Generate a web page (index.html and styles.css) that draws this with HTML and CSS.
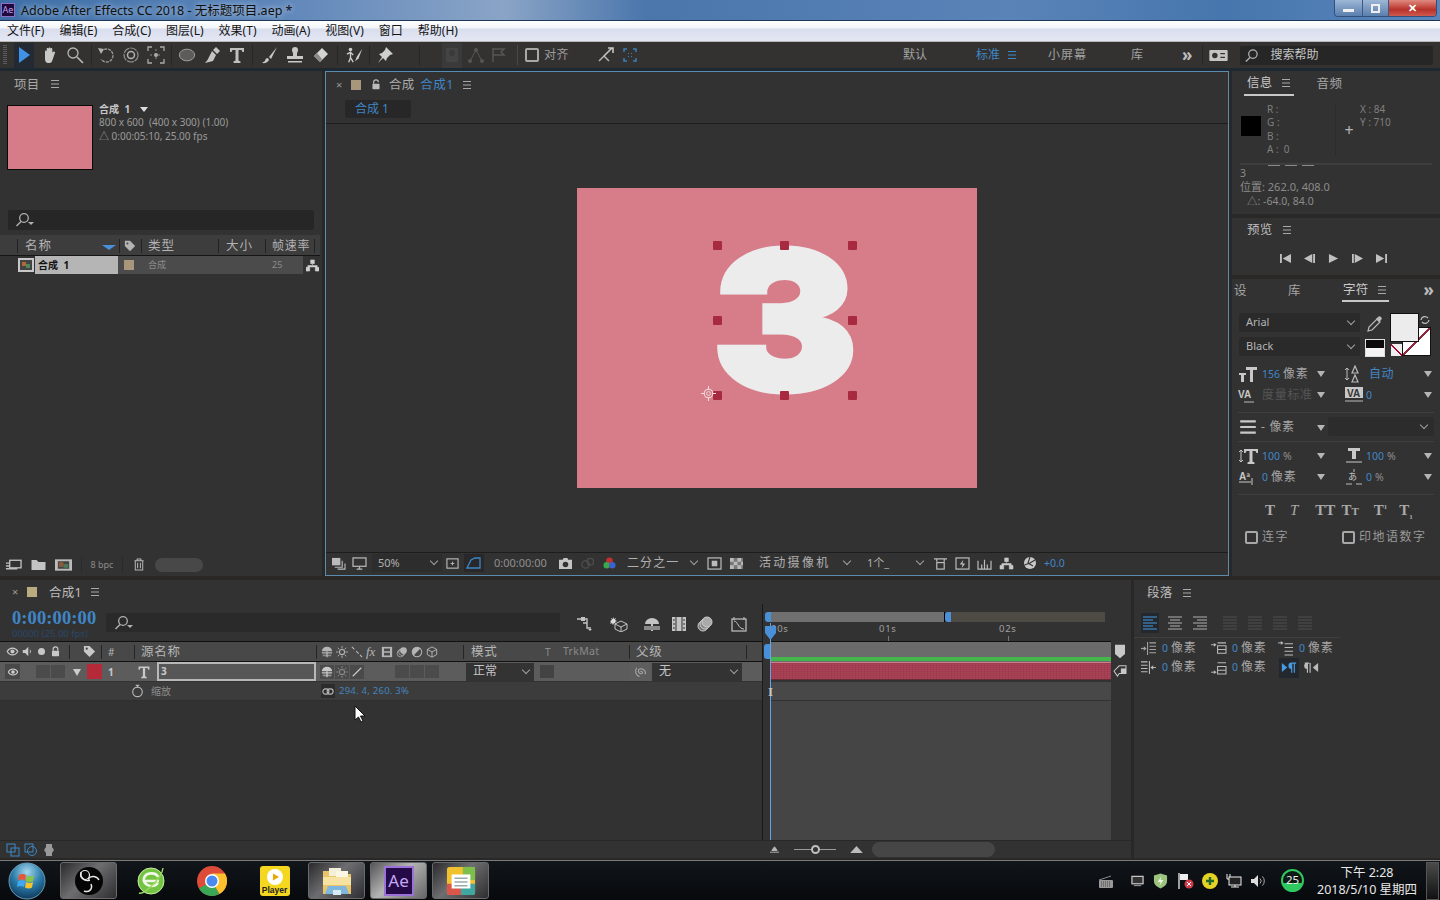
FILE: index.html
```html
<!DOCTYPE html>
<html lang="zh-CN">
<head>
<meta charset="utf-8">
<title>Adobe After Effects CC 2018</title>
<link rel="stylesheet" href="styles.css">
</head>
<body>
<svg class="defs" xmlns="http://www.w3.org/2000/svg">
  <symbol id="i-menu" viewBox="0 0 10 10"><path d="M1 1.5h8M1 5h8M1 8.500h8" stroke="currentColor" stroke-width="1.100" fill="none"/></symbol>
  <symbol id="i-search" viewBox="0 0 22 16"><circle cx="10" cy="6" r="4.300" fill="none" stroke="currentColor" stroke-width="1.300"/><path d="M7 9.500L2.500 14" stroke="currentColor" stroke-width="1.500"/><path d="M14 10h6l-3 3z" fill="currentColor"/></symbol>
  <symbol id="i-eye" viewBox="0 0 14 10"><path d="M1 5c3-5 9-5 12 0c-3 5-9 5-12 0z" fill="none" stroke="currentColor" stroke-width="1.300"/><circle cx="7" cy="5" r="2.300" fill="currentColor"/></symbol>
  <symbol id="i-tag" viewBox="0 0 14 14"><path d="M1 1h6l6 6l-6 6l-6-6z" fill="currentColor"/><circle cx="4" cy="4" r="1.200" fill="#444"/></symbol>
  <symbol id="i-lock" viewBox="0 0 12 14"><path d="M3 6V4a3 3 0 0 1 6 0v2" fill="none" stroke="currentColor" stroke-width="1.500"/><rect x="1.500" y="6" width="9" height="7" rx="1" fill="currentColor"/></symbol>
  <symbol id="i-shy" viewBox="0 0 14 14"><path d="M1 6a6 5 0 0 1 12 0z" fill="currentColor"/><path d="M7 6v7M1 8h12" stroke="currentColor" stroke-width="1.500"/><path d="M2 10h10v2H2z" fill="currentColor" opacity=".6"/></symbol>
  <symbol id="i-sun" viewBox="0 0 14 14"><circle cx="7" cy="7" r="3" fill="none" stroke="currentColor" stroke-width="1.200"/><path d="M7 0v3M7 11v3M0 7h3M11 7h3M2 2l2 2M10 10l2 2M12 2l-2 2M4 10l-2 2" stroke="currentColor"/></symbol>
  <symbol id="i-slash" viewBox="0 0 14 14"><path d="M1 1l3 3M6 6l3 3M10.500 10.500L13 13" stroke="currentColor" stroke-width="1.300"/></symbol>
  <symbol id="i-film" viewBox="0 0 14 14"><rect x="1" y="1" width="12" height="12" fill="currentColor"/><path d="M3.500 3h7v3h-7zM3.500 8h7v3h-7z" fill="#4a4a4a"/></symbol>
  <symbol id="i-blur" viewBox="0 0 16 16"><circle cx="6" cy="10" r="4.500" fill="none" stroke="currentColor"/><circle cx="8" cy="8" r="4.500" fill="none" stroke="currentColor"/><circle cx="10" cy="6" r="4.500" fill="currentColor"/></symbol>
  <symbol id="i-half" viewBox="0 0 14 14"><circle cx="7" cy="7" r="5.500" fill="none" stroke="currentColor" stroke-width="1.200"/><path d="M11 3A5.500 5.500 0 0 0 3 11z" fill="currentColor"/></symbol>
  <symbol id="i-cube" viewBox="0 0 14 14"><path d="M7 1l5.500 3v6L7 13l-5.500-3V4zM1.500 4L7 7l5.500-3M7 7v6" fill="none" stroke="currentColor" stroke-width="1.100"/></symbol>
  <symbol id="i-stopwatch" viewBox="0 0 14 16"><circle cx="7" cy="9" r="5.500" fill="none" stroke="currentColor" stroke-width="1.300"/><path d="M5 1.500h4M7 1.500v2.500" stroke="currentColor" stroke-width="1.300"/></symbol>
  <symbol id="i-link" viewBox="0 0 14 8"><rect x="1" y="1" width="7" height="6" rx="3" fill="none" stroke="currentColor" stroke-width="1.300"/><rect x="6" y="1" width="7" height="6" rx="3" fill="none" stroke="currentColor" stroke-width="1.300"/></symbol>
  <symbol id="i-align" viewBox="0 0 16 14"><path d="M1 1h14M1 4h10M1 7h14M1 10h10M1 13h14" stroke="currentColor" stroke-width="1.200"/></symbol>
  <symbol id="i-alignc" viewBox="0 0 16 14"><path d="M1 1h14M3 4h10M1 7h14M3 10h10M1 13h14" stroke="currentColor" stroke-width="1.200"/></symbol>
  <symbol id="i-alignr" viewBox="0 0 16 14"><path d="M1 1h14M5 4h10M1 7h14M5 10h10M1 13h14" stroke="currentColor" stroke-width="1.200"/></symbol>
  <symbol id="i-justify" viewBox="0 0 16 14"><path d="M1 1h14M1 4h14M1 7h14M1 10h14M1 13h14" stroke="currentColor" stroke-width="1.200"/></symbol>
  <symbol id="i-indent" viewBox="0 0 18 16"><path d="M8 1v14M10 2h7M10 5.500h7M10 9h7M10 12.500h7" stroke="currentColor" stroke-width="1.100"/><path d="M1 8h4" stroke="currentColor" stroke-width="1.300"/><path d="M4 5.500L7 8l-3 2.500z" fill="currentColor"/></symbol>
  <symbol id="i-t" viewBox="0 0 18 18"><path d="M2 2h14v4h-1.500l-1-2H10.500v10.500l2 1V17h-7v-1.500l2-1V4H4.500l-1 2H2z" fill="currentColor"/></symbol>
</svg>

<header class="titlebar">
  <span class="ae-mini">Ae</span>
  <span class="title-text">Adobe After Effects CC 2018 - 无标题项目.aep *</span>
  <div class="winctl">
    <span class="wbtn wmin"><i class="wmin-bar"></i></span>
    <span class="wbtn wmax"><i class="wmax-box"></i></span>
    <span class="wbtn wclose">✕</span>
  </div>
</header>
<nav class="menubar">
  <span>文件(F)</span><span>编辑(E)</span><span>合成(C)</span><span>图层(L)</span><span>效果(T)</span><span>动画(A)</span><span>视图(V)</span><span>窗口</span><span>帮助(H)</span>
</nav>

<div class="toolbar">
  <div class="tools">
    <i class="grip"></i>
    <span class="tool sel"><svg viewBox="0 0 18 18"><path d="M4 1v16l11-8z" fill="#3f92e8"/></svg></span>
    <span class="tool"><svg viewBox="0 0 18 18"><path d="M4 9V5.500c0-1.300 1.700-1.300 1.700 0V3c0-1.300 1.900-1.300 1.900 0v-.5c0-1.300 1.900-1.300 1.900 0V3c0-1.300 1.800-1.300 1.800 0v3.500l1-.8c1-.8 2.300.2 1.600 1.300L11.500 14c-.6 1.700-1.300 3-3 3H7c-2 0-3-2-3-4z" fill="#c8c8c8"/></svg></span>
    <span class="tool"><svg viewBox="0 0 18 18"><circle cx="7" cy="7" r="5" fill="none" stroke="#b5b5b5" stroke-width="1.300"/><path d="M11 11l6 6" stroke="#b5b5b5" stroke-width="1.700"/></svg></span>
    <i class="tsep s1"></i>
    <span class="tool"><svg viewBox="0 0 18 18"><path d="M4 6a6.500 6.500 0 1 1 0 7" fill="none" stroke="#9a9a9a" stroke-width="1.300" stroke-dasharray="3 1"/><path d="M1 2l6 1-3 5z" fill="#b0b0b0"/></svg></span>
    <span class="tool"><svg viewBox="0 0 18 18"><circle cx="9" cy="9" r="7" fill="none" stroke="#909090" stroke-width="1.200" stroke-dasharray="7 1"/><circle cx="9" cy="9" r="3.500" fill="none" stroke="#b0b0b0" stroke-width="1.500"/></svg></span>
    <span class="tool"><svg viewBox="0 0 18 18"><path d="M1 5V1h4M13 1h4v4M17 13v4h-4M5 17H1v-4" fill="none" stroke="#aaa" stroke-width="1.300"/><path d="M9 3v12M3 9h12" stroke="#888" stroke-dasharray="2 2"/><circle cx="9" cy="9" r="2" fill="#aaa"/></svg></span>
    <i class="tsep s2"></i>
    <span class="tool"><svg viewBox="0 0 20 18"><ellipse cx="10" cy="9" rx="8.500" ry="6.500" fill="#5c5c5c" stroke="#a5a5a5"/></svg></span>
    <span class="tool"><svg viewBox="0 0 18 18"><path d="M13 1l4 4-3 3-4-4zM9 5l4 4-3 6-8 2 5-6a1.500 1.500 0 1 1 1 1l-5 5z" fill="#c4c4c4"/></svg></span>
    <span class="tool"><svg class="tool-t" viewBox="0 0 18 18"><use href="#i-t"/></svg></span>
    <i class="tsep s3"></i>
    <span class="tool"><svg viewBox="0 0 18 18"><path d="M16 1L8 11l2 2zM7 12c-2 0-3 1.500-3 3l-3 2c3 .5 6-.5 7-3z" fill="#c8c8c8"/></svg></span>
    <span class="tool"><svg viewBox="0 0 18 18"><path d="M7 8c0-2-1-2-1-4a3 3 0 0 1 6 0c0 2-1 2-1 4v2h6v3H1v-3h6zM2 15h14v1.500H2z" fill="#c8c8c8"/></svg></span>
    <span class="tool"><svg viewBox="0 0 18 18"><path d="M11 2l6 6-8 8-6-6z" fill="#d4d4d4"/><path d="M6 7l5 6-2 3-6-6z" fill="#8a8a8a"/></svg></span>
    <i class="tsep s4"></i>
    <span class="tool"><svg viewBox="0 0 20 18"><circle cx="5" cy="3" r="2" fill="#ccc"/><path d="M1 8l4-2 3 3M5 6v6l-2 5M5 12l3 5" fill="none" stroke="#ccc" stroke-width="1.500"/><path d="M18 2l-6 9-2 5 4-3z" fill="#ccc"/></svg></span>
    <i class="tsep s5"></i>
    <span class="tool"><svg viewBox="0 0 18 18"><path d="M10 1l7 7-3 1-3 3-1 3-3-3-5 5 4-6-3-3 3-1 3-3z" fill="#d0d0d0"/></svg></span>
    <i class="tsep s6"></i>
    <span class="tool dimbox"><svg viewBox="0 0 18 18"><rect x="3" y="2" width="12" height="14" fill="#444"/><circle cx="9" cy="7" r="3" fill="#3a3a3a"/></svg></span>
    <span class="tool dim"><svg viewBox="0 0 18 18"><circle cx="9" cy="4" r="2" fill="#555"/><circle cx="3" cy="15" r="2" fill="#555"/><circle cx="15" cy="15" r="2" fill="#555"/><path d="M9 4L3 15M9 4l6 11" stroke="#555"/></svg></span>
    <span class="tool dim"><svg viewBox="0 0 18 18"><path d="M3 2v14M3 3h11l-3 3 3 3H3" fill="none" stroke="#555" stroke-width="1.500"/></svg></span>
    <i class="tsep s7"></i>
    <span class="check big"></span><span class="snap">对齐</span>
    <span class="tool axis"><svg viewBox="0 0 18 18"><path d="M2 15l5-5 5 5" fill="none" stroke="#b5b5b5" stroke-width="1.500"/><path d="M7 10l8-8M11 2h5v5" fill="none" stroke="#c5c5c5" stroke-width="1.600"/></svg></span>
    <span class="tool fit"><svg viewBox="0 0 18 18"><path d="M3 6V3h3M12 3h3v3M15 12v3h-3M6 15H3v-3" fill="none" stroke="#3c7fb5" stroke-width="1.500"/><path d="M7 7l1 1M11 7l-1 1M7 11l1-1M11 11l-1-1" stroke="#3c7fb5"/></svg></span>
  </div>
  <div class="workspaces">
    <span class="ws ws-def">默认</span>
    <span class="ws ws-active">标准</span>
    <svg class="menu-ic blue ws-menu"><use href="#i-menu"/></svg>
    <span class="ws ws-small">小屏幕</span>
    <span class="ws ws-lib">库</span>
    <span class="chev">»</span>
    <i class="tsep s8"></i>
    <span class="ws-gear"><svg viewBox="0 0 20 12"><rect width="20" height="12" rx="1" fill="#c4c4c4"/><circle cx="6" cy="6" r="3" fill="#333"/><path d="M12 4h5M12 8h5" stroke="#333" stroke-width="1.500"/></svg></span>
    <div class="help-search"><svg class="help-ic" viewBox="0 0 16 16"><circle cx="9.500" cy="6.500" r="4.500" fill="none" stroke="#b5b5b5" stroke-width="1.300"/><path d="M6.500 10L2 14.500" stroke="#b5b5b5" stroke-width="1.500"/></svg><span>搜索帮助</span></div>
  </div>
</div>

<main class="upper">
  <section class="panel project">
    <div class="panel-head"><span class="ptitle">项目</span><svg class="menu-ic"><use href="#i-menu"/></svg></div>
    <div class="proj-info">
      <div class="thumb"></div>
      <div class="proj-meta">
        <div class="proj-name">合成 1 <b class="tri-w"></b></div>
        <div>800 x 600 &nbsp;(400 x 300) (1.00)</div>
        <div>△ 0:00:05:10, 25.00 fps</div>
      </div>
    </div>
    <div class="search proj-search"><svg viewBox="0 0 22 16"><use href="#i-search"/></svg></div>
    <div class="proj-cols">
      <span class="pc c-name">名称<b class="sort"></b></span>
      <span class="pc c-tag"><svg viewBox="0 0 14 14"><use href="#i-tag"/></svg></span>
      <span class="pc c-type">类型</span>
      <span class="pc c-size">大小</span>
      <span class="pc c-fps">帧速率</span>
    </div>
    <div class="proj-row">
      <svg class="comp-ic" viewBox="0 0 16 14"><rect width="16" height="14" fill="#c8c8c8"/><rect x="2" y="2" width="12" height="10" fill="#444"/><rect x="4" y="4" width="4" height="4" fill="#b06a3a"/><rect x="8" y="6" width="4" height="4" fill="#4a8a5a"/></svg>
      <span class="row-name">合成 1</span>
      <span class="row-rest"><i class="swatch-tan"></i><span class="row-type">合成</span><span class="row-fps">25</span></span>
      <svg class="flow-ic" viewBox="0 0 14 14"><path d="M5 1h4v4H5zM0 9h4v4H0zM10 9h4v4h-4zM7 5v2M2 9V7h10v2" fill="#d0d0d0" stroke="#d0d0d0" stroke-width=".6"/></svg>
    </div>
    <div class="grow"></div>
    <div class="proj-foot">
      <svg class="fi" viewBox="0 0 18 12"><rect x="5" y="1" width="12" height="8" fill="none" stroke="#c0c0c0" stroke-width="1.400"/><path d="M1 4h4M1 7h4M1 10h12" stroke="#c0c0c0" stroke-width="1.500"/></svg>
      <svg class="fi" viewBox="0 0 16 12"><path d="M1 1h5l2 2h7v8H1z" fill="#c4c4c4"/></svg>
      <svg class="fi" viewBox="0 0 18 12"><rect width="18" height="12" fill="#bbb"/><rect x="3" y="2" width="12" height="8" fill="#444"/><rect x="4" y="3" width="5" height="5" fill="#8a5a3a"/><rect x="9" y="5" width="5" height="4" fill="#4a7a5a"/></svg>
      <span class="bpc">8 bpc</span>
      <svg class="fi trash" viewBox="0 0 12 14"><path d="M1 3h10M4 3V1h4v2M2 3v10h8V3M4.500 5v6M7.500 5v6" fill="none" stroke="#b5b5b5" stroke-width="1.100"/></svg>
      <span class="pill"></span>
    </div>
  </section>

  <section class="panel comp">
    <div class="comp-head">
      <span class="x">×</span><i class="sq-tan"></i>
      <svg class="lock-ic" viewBox="0 0 12 14"><path d="M3 6V4a3 3 0 0 1 6 0" fill="none" stroke="#bbb" stroke-width="1.500"/><rect x="1.500" y="6" width="9" height="7" rx="1" fill="#bbb"/></svg>
      <span class="ptitle">合成 <em>合成1</em></span>
      <svg class="menu-ic"><use href="#i-menu"/></svg>
    </div>
    <div class="comp-tabs"><span class="comp-tab">合成 1</span></div>
    <div class="canvas">
      <div class="stage">
        <div class="bounds">
          <span class="digit">3</span>
          <i class="h h1"></i><i class="h h2"></i><i class="h h3"></i><i class="h h4"></i><i class="h h5"></i><i class="h h6"></i><i class="h h7"></i><i class="h h8"></i>
          <svg class="anchor" viewBox="0 0 14 14"><circle cx="7" cy="7" r="4" fill="none" stroke="#f2dcdc" stroke-width="1"/><circle cx="7" cy="7" r="1.800" fill="none" stroke="#f2dcdc" stroke-width=".8"/><path d="M7 0v3M7 11v3M0 7h3M11 7h3" stroke="#f2dcdc"/></svg>
        </div>
      </div>
    </div>
    <div class="comp-foot">
      <svg class="cf w1" viewBox="0 0 16 14"><rect x="1" y="1" width="9" height="8" fill="#bbb"/><path d="M12 4v7H4M15 7v6H7" fill="none" stroke="#bbb" stroke-width="1.200"/></svg>
      <svg class="cf w2" viewBox="0 0 16 14"><rect x="1" y="1" width="14" height="9" fill="none" stroke="#bbb" stroke-width="1.300"/><path d="M5 13h6M8 10v3" stroke="#bbb" stroke-width="1.300"/></svg>
      <span class="cdrop d50">50%<b class="v"></b></span>
      <svg class="cf w3" viewBox="0 0 16 14"><rect x="2" y="2" width="12" height="10" fill="none" stroke="#bbb" stroke-width="1.200"/><path d="M8 5v4M6 7h4" stroke="#bbb"/></svg>
      <span class="cf-act"><svg viewBox="0 0 16 14"><path d="M1 12h13V2H9L5 4z M1 12l4-8" fill="none" stroke="#3f86c6" stroke-width="1.300"/></svg></span>
      <span class="ctime">0:00:00:00</span>
      <svg class="cf w4" viewBox="0 0 16 14"><path d="M1 3h4l1-2h4l1 2h4v10H1z" fill="#c4c4c4"/><circle cx="8" cy="8" r="3" fill="#333"/></svg>
      <svg class="cf w5" viewBox="0 0 16 14"><circle cx="6" cy="8" r="4" fill="none" stroke="#4d4d4d" stroke-width="1.400"/><circle cx="11" cy="5" r="3.500" fill="none" stroke="#4d4d4d" stroke-width="1.400"/></svg>
      <svg class="cf w6" viewBox="0 0 16 14"><circle cx="8" cy="4" r="3.500" fill="#c43030"/><circle cx="5" cy="9" r="3.500" fill="#38a848"/><circle cx="11" cy="9" r="3.500" fill="#3c62cf"/></svg>
      <span class="cdrop dhalf">二分之一<b class="v"></b></span>
      <svg class="cf w7" viewBox="0 0 16 14"><rect x="1" y="1" width="14" height="12" fill="none" stroke="#bbb" stroke-width="1.300"/><rect x="5" y="4" width="6" height="6" fill="#bbb"/></svg>
      <svg class="cf w8" viewBox="0 0 16 14"><rect x="1" y="1" width="14" height="12" fill="#777"/><path d="M1 1h4v4H1zM9 1h4v4H9zM5 5h4v4H5zM13 5h2v4h-2zM1 9h4v4H1zM9 9h4v4H9z" fill="#bbb"/></svg>
      <span class="cdrop dcam">活动摄像机<b class="v"></b></span>
      <span class="cdrop done">1个_<b class="v"></b></span>
      <svg class="cf w9" viewBox="0 0 16 14"><path d="M1 2h14M4 2v3M12 2v3" stroke="#bbb" stroke-width="1.300"/><rect x="4" y="6" width="8" height="7" fill="none" stroke="#bbb" stroke-width="1.300"/></svg>
      <svg class="cf w9" viewBox="0 0 16 14"><rect x="1" y="1" width="14" height="12" fill="none" stroke="#bbb" stroke-width="1.300"/><path d="M9 3L5 8h3l-1 4 4-5H8z" fill="#bbb"/></svg>
      <svg class="cf w9" viewBox="0 0 16 14"><path d="M1 4v9h14V4M5 13V8M8 13V3M11 13V8" fill="none" stroke="#bbb" stroke-width="1.300"/></svg>
      <svg class="cf w9" viewBox="0 0 14 14"><path d="M5 1h4v4H5zM0 9h4v4H0zM10 9h4v4h-4zM7 5v2M2 9V7h10v2" fill="#c8c8c8" stroke="#c8c8c8" stroke-width=".6"/></svg>
      <svg class="cf w10" viewBox="0 0 14 14"><circle cx="7" cy="7" r="6" fill="#c8c8c8"/><path d="M7 1L5 7l5 3M1.500 9L7 7M12 4L7 7" stroke="#333" stroke-width="1.100" fill="none"/></svg>
      <span class="plus">+0.0</span>
    </div>
  </section>

  <aside class="right">
    <section class="panel info">
      <div class="tabs"><span class="tab active">信息<svg class="menu-ic"><use href="#i-menu"/></svg></span><span class="tab t-audio">音频</span></div>
      <div class="info-body">
        <i class="black"></i>
        <div class="rgb"><div>R :</div><div>G :</div><div>B :</div><div>A : &nbsp;0</div></div>
        <i class="vsep"></i>
        <span class="cross">+</span>
        <div class="xy"><div>X : 84</div><div>Y : 710</div></div>
      </div>
      <div class="info-clip"><i></i><i></i><i></i></div>
      <div class="info-extra">
        <div class="ie1">3</div>
        <div class="ie2">位置: 262.0, 408.0</div>
        <div class="ie3">△: -64.0, 84.0</div>
      </div>
    </section>
    <section class="panel preview">
      <div class="pv-head"><span class="ptitle lt">预览</span><svg class="menu-ic"><use href="#i-menu"/></svg></div>
      <div class="pv-ctl">
        <svg viewBox="0 0 14 12"><path d="M2 1v10" stroke="#c0c0c0" stroke-width="2"/><path d="M13 1v10L4 6z" fill="#c0c0c0"/></svg>
        <svg viewBox="0 0 14 12"><path d="M12 1v10" stroke="#c0c0c0" stroke-width="2"/><path d="M10 1v10L1 6z" fill="#c0c0c0"/></svg>
        <svg viewBox="0 0 14 12"><path d="M2 1v10l10-5z" fill="#c0c0c0"/></svg>
        <svg viewBox="0 0 14 12"><path d="M2 1v10" stroke="#c0c0c0" stroke-width="2"/><path d="M4 1v10l9-5z" fill="#c0c0c0"/></svg>
        <svg viewBox="0 0 14 12"><path d="M12 1v10" stroke="#c0c0c0" stroke-width="2"/><path d="M1 1v10l9-5z" fill="#c0c0c0"/></svg>
      </div>
    </section>
    <section class="panel chars">
      <div class="tabs ctabs"><span class="tab t-she">设</span><span class="tab t-lib">库</span><span class="tab active t-ch">字符<svg class="menu-ic"><use href="#i-menu"/></svg></span><span class="chev c-ch">»</span></div>
      <div class="font-area">
        <div class="font-sel">
          <div class="fsel">Arial<b class="v"></b></div>
          <div class="fsel">Black<b class="v"></b></div>
        </div>
        <div class="font-tools">
          <svg class="dropper" viewBox="0 0 16 16"><path d="M10 3l3 3-8 8-4 1 1-4z" fill="none" stroke="#bbb" stroke-width="1.200"/><path d="M9 3l2-2c1-1 2-1 3 0s1 2 0 3l-2 2z" fill="#bbb"/></svg>
          <div class="bw"></div>
        </div>
        <div class="swatches">
          <i class="sw-stroke"></i>
          <i class="sw-fill"></i>
          <i class="sw-none"></i>
          <svg class="sw-swap" viewBox="0 0 12 12"><path d="M2 6a4 4 0 0 1 7-2M10 6a4 4 0 0 1-7 2" fill="none" stroke="#bbb" stroke-width="1.300"/></svg>
        </div>
      </div>
      <div class="cgrid sepb">
        <div class="cc"><svg class="ci" viewBox="0 0 20 18"><path d="M1 8h7v2H6v7H3v-7H1z M8 2h11v3h-4v12h-3V5H8z" fill="#c8c8c8"/></svg><span class="bl">156</span><span class="u">像素</span><b class="tr"></b></div>
        <div class="cc c2"><svg class="ci" viewBox="0 0 20 18"><path d="M11 1l-3 7h6zM11 10l-3 7h6z" fill="none" stroke="#bbb" stroke-width="1.200"/><path d="M3 3v12M1 5l2-2 2 2M1 13l2 2 2-2" fill="none" stroke="#bbb"/></svg><span class="bl auto">自动</span><b class="tr"></b></div>
        <div class="cc"><svg class="ci" viewBox="0 0 20 18"><text x="0" y="12" class="svgt">VA</text><path d="M6 16h10" stroke="#bbb"/></svg><span class="u dimt">度量标准</span><b class="tr"></b></div>
        <div class="cc c2"><svg class="ci" viewBox="0 0 20 18"><rect x="1" y="1" width="18" height="11" fill="#c8c8c8"/><text x="3" y="10.500" class="svgd">VA</text><path d="M1 15h18" stroke="#bbb"/></svg><span class="bl">0</span><b class="tr"></b></div>
      </div>
      <div class="crow sepb">
        <svg class="ci" viewBox="0 0 18 14"><path d="M2 2h14M2 7h14M2 12h14" stroke="#c8c8c8" stroke-width="2"/></svg>
        <span class="u">- 像素</span><b class="tr"></b>
        <span class="empty-drop"><b class="v"></b></span>
      </div>
      <div class="cgrid sepb g3">
        <div class="cc"><svg class="ci" viewBox="0 0 20 18"><use href="#i-t" x="3"/><path d="M3 3v12M1 5l2-2 2 2M1 13l2 2 2-2" fill="none" stroke="#c8c8c8"/></svg><span class="bl">100</span><span class="us">%</span><b class="tr"></b></div>
        <div class="cc c2"><svg class="ci" viewBox="0 0 20 18"><path d="M4 1h12v3h-4v8H8V4H4z" fill="#c8c8c8"/><path d="M2 15h16" stroke="#c8c8c8"/></svg><span class="bl">100</span><span class="us">%</span><b class="tr"></b></div>
        <div class="cc"><svg class="ci" viewBox="0 0 20 18"><text x="1" y="12" class="svgt">Aª</text><path d="M1 14h12M14 10v7" stroke="#c8c8c8"/></svg><span class="bl">0</span><span class="u">像素</span><b class="tr"></b></div>
        <div class="cc c2"><svg class="ci" viewBox="0 0 20 18"><text x="4" y="12" class="svgs">あ</text><path d="M10 1v3M2 16h6M12 16h6" stroke="#bbb"/></svg><span class="bl">0</span><span class="us">%</span><b class="tr"></b></div>
      </div>
      <div class="styles"><span>T</span><span class="it">T</span><span class="tt">TT</span><span class="tsc">T<small>T</small></span><span class="tsup">T<sup>1</sup></span><span class="tsub">T<sub>1</sub></span></div>
      <div class="ligs"><span class="check"></span><span class="lt1">连字</span><span class="check c-hi"></span><span class="lt1">印地语数字</span></div>
    </section>
  </aside>
</main>

<section class="lower">
  <section class="panel timeline">
    <div class="tl-head">
      <span class="x">×</span><i class="sq-tan lt"></i><span class="ptitle lt tl-name">合成1</span><svg class="menu-ic"><use href="#i-menu"/></svg>
    </div>
    <div class="tl-grid">
      <div class="tl-left">
        <div class="tl-ctl">
          <div class="timecode"><div class="tc">0:00:00:00</div><div class="tf">00000 (25.00 fps)</div></div>
          <div class="search tl-search"><svg viewBox="0 0 22 16"><use href="#i-search"/></svg></div>
          <div class="tl-btns">
            <svg viewBox="0 0 18 16"><path d="M1 3h6M7 3h4v9h4M7 7h4" fill="none" stroke="#c4c4c4" stroke-width="1.400"/><rect x="5" y="1" width="4" height="4" fill="#c4c4c4"/><path d="M12 13h4l-2 2z" fill="#c4c4c4"/></svg>
            <svg viewBox="0 0 18 16"><path d="M3 1l1 2 2-1-1 2 2 1-2 1 1 2-2-1-1 2-1-2-2 1 1-2-1-1 2-1-1-2 2 1z" fill="#ddd"/><path d="M11 5l6 3v5l-6 3-6-3V8zM5 8l6 3 6-3M11 11v5" fill="none" stroke="#c4c4c4"/></svg>
            <svg viewBox="0 0 18 16"><path d="M2 8a7 6 0 0 1 14 0z" fill="#c4c4c4"/><path d="M9 8v7" stroke="#c4c4c4" stroke-width="2"/><path d="M1 10h16v4H1z" fill="#8a8a8a"/></svg>
            <svg viewBox="0 0 18 16"><rect x="2" y="1" width="14" height="14" fill="#c4c4c4"/><path d="M6 1v14M12 1v14" stroke="#333"/><path d="M3 4h2M3 8h2M3 12h2M13 4h2M13 8h2M13 12h2" stroke="#333"/></svg>
            <svg viewBox="0 0 18 16"><circle cx="7" cy="10" r="5" fill="#777" stroke="#ccc"/><circle cx="9" cy="8" r="5" fill="#888" stroke="#ccc"/><circle cx="11" cy="6" r="5" fill="#aaa" stroke="#ccc"/></svg>
            <svg viewBox="0 0 18 16"><rect x="2" y="3" width="14" height="12" fill="none" stroke="#c4c4c4" stroke-width="1.200"/><path d="M4 5c4 0 4 8 10 8M4 1v3M14 1v3" fill="none" stroke="#c4c4c4"/></svg>
          </div>
        </div>
        <div class="tl-cols">
          <span class="tc-ic"><svg class="e" viewBox="0 0 14 10"><use href="#i-eye"/></svg><svg viewBox="0 0 14 14"><path d="M1 5h3l4-4v12l-4-4H1zM10 4a4 4 0 0 1 0 6" fill="#c8c8c8"/></svg><i class="dot"></i><svg viewBox="0 0 12 14"><use href="#i-lock"/></svg></span>
          <span class="tc-tag"><svg viewBox="0 0 14 14"><use href="#i-tag"/></svg></span>
          <span class="tc-num">#</span>
          <span class="tc-src">源名称</span>
          <span class="tc-sw"><svg viewBox="0 0 14 14"><use href="#i-shy"/></svg><svg viewBox="0 0 14 14"><use href="#i-sun"/></svg><svg viewBox="0 0 14 14"><use href="#i-slash"/></svg><span class="fx">fx</span><svg viewBox="0 0 14 14"><use href="#i-film"/></svg><svg viewBox="0 0 16 16"><use href="#i-blur"/></svg><svg viewBox="0 0 14 14"><use href="#i-half"/></svg><svg viewBox="0 0 14 14"><use href="#i-cube"/></svg></span>
          <span class="tc-mode">模式</span>
          <span class="tc-t">T</span><span class="tc-trk">TrkMat</span>
          <span class="tc-par">父级</span>
          <span class="tc-end"></span>
        </div>
        <div class="layer">
          <span class="l-eye"><svg viewBox="0 0 14 10"><use href="#i-eye"/></svg></span>
          <i class="lbox b1"></i><i class="lbox"></i>
          <b class="twirl"></b>
          <i class="lred"></i>
          <span class="lnum">1</span>
          <svg class="lt-t" viewBox="0 0 18 18"><use href="#i-t"/></svg>
          <span class="lname">3</span>
          <span class="lsw"><svg viewBox="0 0 14 14"><use href="#i-shy"/></svg></span>
          <span class="lsw dimsw"><svg viewBox="0 0 14 14"><use href="#i-sun"/></svg></span>
          <span class="lsw"><svg viewBox="0 0 14 14"><path d="M2 12L12 2" stroke="currentColor" stroke-width="1.400"/></svg></span>
          <i class="lbox b2"></i><i class="lbox"></i><i class="lbox"></i>
          <span class="ldrop lmode">正常<b class="v"></b></span>
          <i class="lbox b3"></i>
          <span class="spiral"><svg viewBox="0 0 14 14"><path d="M7 7a1.500 1.500 0 0 1 2 2a3 3 0 0 1-4-4a4.500 4.500 0 0 1 7 5M3 3a6 6 0 0 0 3 9.500" fill="none" stroke="#aaa" stroke-width="1.100"/></svg></span>
          <span class="ldrop lparent">无<b class="v"></b></span>
        </div>
        <div class="prop">
          <svg class="stop" viewBox="0 0 14 16"><use href="#i-stopwatch"/></svg>
          <span class="pname">缩放</span>
          <span class="plink"><svg viewBox="0 0 14 8"><use href="#i-link"/></svg></span>
          <span class="pval">294. 4, 260. 3%</span>
        </div>
        <div class="grow"></div>
      </div>
      <div class="tl-right">
        <div class="ruler">
          <div class="navbar"><i class="nav-h"></i><div class="nav-on"></div><i class="nav-h"></i><div class="nav-off"></div></div>
          <div class="marks"><span class="m0">00s</span><span class="m1">01s</span><span class="m2">02s</span><i class="tick t-a"></i><i class="tick t-b"></i></div>
        </div>
        <div class="work"><i class="work-h"></i><div class="work-main"><div class="work-green"></div></div><svg class="shield" viewBox="0 0 14 18"><path d="M1 1h12v11l-6 5-6-5z" fill="#c8c8c8"/></svg></div>
        <div class="bar-row"><div class="lbar"></div><svg class="shield-b" viewBox="0 0 16 14"><path d="M1 7l6-6h8v9H7l-2 3z" fill="#333" stroke="#c8c8c8" stroke-width="1.200"/><rect x="9" y="4" width="6" height="6" fill="#c8c8c8"/></svg></div>
        <div class="prop-r"><div class="prop-area"></div></div>
        <div class="rest-r"><div class="rest-area"></div></div>
        <i class="playhead"></i>
        <i class="phead-top"></i>
        <span class="ibeam">I</span>
      </div>
    </div>
    <div class="tl-foot">
      <svg viewBox="0 0 14 14"><rect x="1" y="1" width="8" height="8" fill="none" stroke="#3f86c6"/><rect x="5" y="5" width="8" height="8" fill="none" stroke="#3f86c6"/></svg>
      <svg viewBox="0 0 14 14"><rect x="1" y="1" width="8" height="8" fill="none" stroke="#3f86c6"/><circle cx="8" cy="8" r="4.500" fill="none" stroke="#3f86c6"/></svg>
      <svg viewBox="0 0 14 14"><path d="M4 1h6v3l2 3-2 3v3H4v-3L2 7l2-3z" fill="#999"/></svg>
      <span class="grow"></span>
      <svg class="zoom-a" viewBox="0 0 14 10"><path d="M7 2l3 4H4z M2 8h10" fill="#bbb" stroke="#bbb"/></svg>
      <span class="zslider"><i></i></span>
      <svg class="zoom-b" viewBox="0 0 18 10"><path d="M9 1l7 8H2z" fill="#bbb"/></svg>
      <span class="zpill"></span>
    </div>
  </section>
  <section class="panel para">
    <div class="pv-head para-head"><span class="ptitle lt">段落</span><svg class="menu-ic"><use href="#i-menu"/></svg></div>
    <div class="al-row">
      <span class="al on"><svg viewBox="0 0 16 14"><use href="#i-align"/></svg></span>
      <span class="al"><svg viewBox="0 0 16 14"><use href="#i-alignc"/></svg></span>
      <span class="al al3"><svg viewBox="0 0 16 14"><use href="#i-alignr"/></svg></span>
      <span class="al d"><svg viewBox="0 0 16 14"><use href="#i-justify"/></svg></span>
      <span class="al d"><svg viewBox="0 0 16 14"><use href="#i-justify"/></svg></span>
      <span class="al d"><svg viewBox="0 0 16 14"><use href="#i-justify"/></svg></span>
      <span class="al d"><svg viewBox="0 0 16 14"><use href="#i-justify"/></svg></span>
    </div>
    <div class="pa-grid">
      <div class="pa"><svg viewBox="0 0 18 16"><use href="#i-indent"/></svg><span class="bl">0</span><span class="u">像素</span></div>
      <div class="pa"><svg viewBox="0 0 18 16"><path d="M8 2h9M8 5h9v8H8zM8 9h9" fill="none" stroke="#bbb" stroke-width="1.100"/><path d="M1 4h4" stroke="#bbb"/><path d="M4 2l3 2-3 2z" fill="#bbb"/></svg><span class="bl">0</span><span class="u">像素</span></div>
      <div class="pa"><svg viewBox="0 0 18 16"><path d="M8 3h9M8 7h9M8 11h9M8 15h9" stroke="#bbb" stroke-width="1.100"/><path d="M1 2h4" stroke="#bbb"/><path d="M4 0l3 2-3 2z" fill="#bbb"/></svg><span class="bl">0</span><span class="u">像素</span></div>
      <div class="pa"><svg viewBox="0 0 18 16"><path d="M1 2h7M1 5.500h7M1 9h7M1 12.500h7M10 1v14" stroke="#bbb" stroke-width="1.100"/><path d="M13 8h4" stroke="#bbb"/><path d="M14 5.500L11 8l3 2.500z" fill="#bbb"/></svg><span class="bl">0</span><span class="u">像素</span></div>
      <div class="pa"><svg viewBox="0 0 18 16"><path d="M8 3h9M8 7h9v8H8zM8 11h9" fill="none" stroke="#bbb" stroke-width="1.100"/><path d="M1 13h4" stroke="#bbb"/><path d="M4 11l3 2-3 2z" fill="#bbb"/></svg><span class="bl">0</span><span class="u">像素</span></div>
      <div class="pa pa-dir"><span class="dir on"><svg viewBox="0 0 18 14"><path d="M1 2v10l6-5z" fill="#4a9ae0"/><path d="M12 2h5M12 2v11M15 2v11M12 2a3 3 0 0 0 0 6" stroke="#4a9ae0" fill="#4a9ae0" stroke-width="1.300"/></svg></span><span class="dir"><svg viewBox="0 0 18 14"><path d="M17 2v10l-6-5z" fill="#bbb"/><path d="M2 2h5M5 2v11M8 2v11M5 2a3 3 0 0 0 0 6" stroke="#bbb" fill="#bbb" stroke-width="1.300"/></svg></span></div>
    </div>
  </section>
</section>

<footer class="taskbar">
  <span class="orb"><svg viewBox="0 0 38 38"><defs><radialGradient id="og" cx=".5" cy=".25" r=".75"><stop offset="0" stop-color="#a5d8ee"/><stop offset=".55" stop-color="#2a7aa8"/><stop offset="1" stop-color="#0f3a5c"/></radialGradient></defs><circle cx="19" cy="19" r="18" fill="url(#og)" stroke="#6a9ab5"/><path d="M11 13c2.500-1.600 5-1 7 0l-1 5.500c-2-1-4.500-1.500-7 0z" fill="#e8563a"/><path d="M19 13.500c2 1 4.500 1.600 7 0l-1 5.500c-2.500 1.600-5 1-7 0z" fill="#8cc63f"/><path d="M10 19.500c2.500-1.600 5-1 7 0l-1 5.500c-2-1-4.500-1.500-7 0z" fill="#3fa9f5"/><path d="M18 20c2 1 4.500 1.600 7 0l-1 5.500c-2.500 1.600-5 1-7 0z" fill="#f7c42e"/></svg></span>
  <span class="tb-btn b-obs"><svg viewBox="0 0 30 30"><circle cx="15" cy="15" r="14" fill="#050505"/><circle cx="11" cy="9" r="4.500" fill="none" stroke="#e8e8e8" stroke-width="1.200"/><path d="M7 6c-1 5 3 10 9 8M25 14c-2-4-8-5-11-1M10 25c5 2 9-2 7-7" fill="none" stroke="#e8e8e8" stroke-width="1.500"/></svg></span>
  <span class="tb-plain t-ie"><svg viewBox="0 0 30 30"><circle cx="15" cy="15" r="13" fill="#74c443"/><circle cx="15" cy="15" r="13" fill="none" stroke="#c8eca0"/><path d="M7 15h16M22 11c-2-5-12-5-14 1c-2 7 9 11 14 5" fill="none" stroke="#f2f8e8" stroke-width="2.600"/><path d="M3 27C8 29 26 12 27 2" fill="none" stroke="#9ad860" stroke-width="1.400"/></svg></span>
  <span class="tb-plain t-chrome"><svg viewBox="0 0 30 30"><circle cx="15" cy="15" r="15" fill="#dd4b39"/><path d="M15 15L2 22.500A15 15 0 0 0 22.500 28z" fill="#3aa757"/><path d="M15 15l7.500 13A15 15 0 0 0 28 7.500H15z" fill="#fbc02d"/><circle cx="15" cy="15" r="7" fill="#fff"/><circle cx="15" cy="15" r="5.500" fill="#4a8af0"/></svg></span>
  <span class="tb-plain t-pl"><span class="player"><svg class="pl-dot" viewBox="0 0 16 16"><circle cx="8" cy="8" r="8" fill="#fff"/><path d="M6 4.500v7l6-3.500z" fill="#e8a800"/></svg><span class="pl-tx">Player</span></span></span>
  <span class="tb-btn b-ex"><svg viewBox="0 0 34 32"><path d="M3 6h12l3 3h13v20H3z" fill="#e9c46a"/><path d="M9 3h12v8H9z" fill="#f4f0d8"/><path d="M16 6h12v6H16z" fill="#fbf7e4"/><rect x="3" y="12" width="28" height="8" fill="#f7e3a1"/><path d="M8 21h18l3 8H5z" fill="#7fb6dc"/><rect x="13" y="25" width="8" height="5" fill="#d7ebf5"/></svg></span>
  <span class="tb-btn b-ae"><span class="ae-big">Ae</span></span>
  <span class="tb-btn b-note"><svg viewBox="0 0 32 32"><rect x="1" y="1" width="30" height="30" rx="3" fill="#f2c12e"/><path d="M1 19h15v12H4a3 3 0 0 1-3-3z" fill="#d9574a"/><path d="M16 19h15v9a3 3 0 0 1-3 3H16z" fill="#3fa6a0"/><path d="M18 1h13v14H18z" fill="#7dbf4a"/><path d="M6 9h20v15H6z" fill="#fff"/><path d="M9 13h14M9 17h14M9 21h14" stroke="#9aa" stroke-width="1.500"/></svg></span>
  <span class="grow"></span>
  <div class="tray">
    <svg class="t1" viewBox="0 0 16 14"><path d="M1 6l12-4" stroke="#888"/><rect x="1" y="6" width="14" height="8" rx="1" fill="#999"/><path d="M3 8h10M3 10h10M3 12h10" stroke="#444" stroke-dasharray="1 1"/></svg>
    <svg class="t2" viewBox="0 0 14 12"><rect x="1" y="1" width="12" height="8" fill="#333" stroke="#ccc" stroke-width="1.300"/><path d="M3 11h8" stroke="#aaa"/></svg>
    <svg class="t3" viewBox="0 0 16 16"><path d="M8 0l7 2v6c0 4-3 6-7 8-4-2-7-4-7-8V2z" fill="#9bc47e"/><path d="M9 3L5 9h3l-1 4 4-6H8z" fill="#f2f6e0"/></svg>
    <svg class="t4" viewBox="0 0 16 16"><path d="M1 0v16" stroke="#eee" stroke-width="1.300"/><path d="M2 1h8v6H2z" fill="#eee"/><circle cx="11" cy="11" r="4.500" fill="#d23b4a"/><path d="M9 9l4 4M13 9l-4 4" stroke="#fff"/></svg>
    <svg class="t5" viewBox="0 0 16 16"><circle cx="8" cy="8" r="8" fill="#e6d225"/><path d="M8 4v8M4 8h8" stroke="#1f6a28" stroke-width="2.400"/></svg>
    <svg class="t6" viewBox="0 0 16 14"><path d="M1 0v5h3V0" stroke="#eee" fill="none"/><rect x="3" y="3" width="12" height="8" fill="#222" stroke="#eee"/><path d="M9 11v2M5 13h8" stroke="#eee"/></svg>
    <svg class="t7" viewBox="0 0 16 14"><path d="M1 5h3l4-4v12l-4-4H1z" fill="#ddd"/><path d="M10 4.500a3.500 3.500 0 0 1 0 5M12.500 2.500a6.500 6.500 0 0 1 0 9" fill="none" stroke="#aaa"/></svg>
    <span class="ring"><span>25</span></span>
    <div class="clock"><div>下午 2:28</div><div>2018/5/10 星期四</div></div>
    <i class="showdesk"></i>
  </div>
</footer>
<svg class="cursor" viewBox="0 0 12 18"><path d="M1 1v14l3.500-3 2.500 5 2-1-2.500-5H11z" fill="#fff" stroke="#111"/></svg>
</body>
</html>
```
FILE: styles.css
```css
* { box-sizing: border-box; }
html, body { margin: 0; padding: 0; }
body {
  width: 1440px; height: 900px; overflow: hidden; position: relative;
  display: flex; flex-direction: column;
  background: #292827; color: #a5a5a5;
  font: 12px/1.2 "Noto Sans", "Noto Sans CJK SC", sans-serif;
}
i, b, em { font-style: normal; }
svg { display: block; flex: none; }
.defs { display: none; }
.grow { flex: 1; }

/* window chrome */
.titlebar {
  height: 21px; display: flex; align-items: center; flex: none;
  background: linear-gradient(90deg, #3d6ea6 0%, #5b84b9 18%, #8aa4c6 35%, #4a76ac 45%, #5a84b8 70%, #4676ad 85%, #5a86bc 100%);
  border-bottom: 1px solid #1f3554; color: #0a0a0a; position: relative;
}
.ae-mini { width: 14px; height: 14px; margin-left: 1px; background: #22093d; border: 1px solid #8c6fc6; color: #b9a1ea; font-size: 9px; line-height: 12px; text-align: center; }
.title-text { margin-left: 6px; font-size: 12.500px; color: #101010; text-shadow: 0 0 6px #dbe6f4; }
.winctl { position: absolute; right: 3px; top: 0; display: flex; height: 17px; border: 1px solid #31517c; border-top: 0; border-radius: 0 0 4px 4px; overflow: hidden; }
.wbtn { display: flex; align-items: center; justify-content: center; height: 100%; color: #fff; background: linear-gradient(#9cb6d6, #5a7fae); border-right: 1px solid #3c5a85; }
.wmin { width: 28px; } .wmax { width: 26px; }
.wclose { width: 47px; border: 0; background: linear-gradient(#e08a80, #b8322a 60%, #cf5a4e); font-size: 11px; font-weight: 700; }
.wmin-bar { width: 11px; height: 3px; background: #f0f0f0; margin-top: 4px; }
.wmax-box { width: 9px; height: 9px; border: 2px solid #eee; }
.menubar {
  height: 21px; flex: none; display: flex; align-items: center; gap: 15px; padding-left: 7px;
  background: linear-gradient(#fdfefe 0%, #f3f5fa 35%, #d9deee 40%, #e4e7f3 100%);
  border-bottom: 1px solid #b8b8b8; color: #151515; font-size: 12px;
}

/* toolbar */
.toolbar { height: 29px; flex: none; display: flex; background: #333231; border-bottom: 3px solid #1e2830; }
.tools { display: flex; align-items: center; padding-left: 3px; width: 900px; }
.grip { width: 4px; height: 20px; margin-right: 7px; background: repeating-linear-gradient(#5a5a5a 0 1px, #333 1px 2px); }
.tool { width: 25px; height: 25px; display: flex; align-items: center; justify-content: center; }
.tool svg { width: 18px; height: 18px; }
.tool.sel { width: 20px; background: #232a33; margin-right: 3px; }
.tool .tool-t { width: 18px; height: 18px; color: #c0c0c0; }
.tsep { width: 1px; height: 20px; background: #262626; }
.s1 { margin: 0 1px 0 4px; } .s2 { margin: 0 2px 0 3px; } .s3 { margin: 0 4px 0 3px; } .s4 { margin: 0 4px 0 5px; } .s5 { margin: 0 2px; }
.s6 { margin: 0 22px 0 22px; } .s7 { margin: 0 7px 0 7px; background: #484848; }
.s8 { margin: 0 6px 0 10px; }
.dimbox { background: #3a3a3a; width: 20px; margin-right: 2px; }
.dim { width: 23px; }
.check { width: 13px; height: 13px; border: 2px solid #a8a8a8; border-radius: 2px; flex: none; }
.check.big { width: 14px; height: 14px; }
.snap { margin-left: 5px; color: #9c9c9c; font-size: 12px; width: 32px; letter-spacing: .5px; }
.axis { margin-left: 17px; }
.fit { margin-left: -1px; }
.workspaces { flex: 1; display: flex; align-items: center; font-size: 12px; color: #a2a2a2; }
.ws-def { margin-left: 3px; width: 61px; }
.ws-active { color: #3f86c6; margin-left: 12px; width: 30px; }
.menu-ic { width: 10px; height: 10px; color: #a8a8a8; }
.menu-ic.blue { color: #3f86c6; }
.ws-menu { margin-left: 1px; }
.ws-small { margin-left: 31px; width: 50px; letter-spacing: 1px; }
.ws-lib { margin-left: 33px; }
.chev { margin-left: 39px; font-size: 17px; line-height: 14px; font-weight: 700; color: #bdbdbd; }
.ws-gear svg { width: 19px; height: 11px; }
.help-search { margin-left: 12px; width: 193px; height: 19px; background: #262626; border-radius: 2px; display: flex; align-items: center; padding-left: 4px; gap: 11px; color: #c4c4c4; }
.help-ic { width: 15px; height: 15px; }

/* main */
.upper { height: 505px; flex: none; display: flex; gap: 3px; margin-top: 0; }
.panel { background: #333232; display: flex; flex-direction: column; }
.panel-head { height: 26px; display: flex; align-items: center; padding: 0 0 0 14px; gap: 10px; margin-top: 0; }
.ptitle { color: #a9a9a9; font-size: 12.500px; letter-spacing: .3px; }
.ptitle.lt { color: #bdbdbd; }
.ptitle em { color: #3f86c6; margin-left: 2px; letter-spacing: .6px; }
.project { width: 322px; }
.proj-info { display: flex; height: 113px; padding: 8px 0 0 7px; }
.thumb { width: 86px; height: 65px; background: #d57c88; border: 1px solid #0a0a0a; }
.proj-meta { margin-left: 6px; font-size: 10px; line-height: 13.300px; color: #9a9a9a; margin-top: -2px; }
.proj-name { color: #c8c8c8; font-weight: 700; font-size: 10px; word-spacing: 3px; }
.tri-w { display: inline-block; width: 0; height: 0; border: 4px solid transparent; border-top: 5px solid #ddd; border-bottom: 0; margin-left: 4px; vertical-align: 1px; }
.search { background: #262626; border-radius: 2px; height: 20px; display: flex; align-items: center; padding-left: 6px; color: #b0b0b0; }
.search svg { width: 22px; height: 16px; }
.proj-search { margin: 0 8px; }
.proj-cols { display: flex; height: 21px; margin-top: 5px; padding-top: 1px; background: #3d3d3d; align-items: center; border-bottom: 1px solid #151515; color: #b3b3b3; font-size: 12.500px; letter-spacing: 1px; padding-left: 17px; width: 320px; }
.pc { height: 14px; line-height: 14px; border-left: 1px solid #222; display: flex; align-items: center; padding-left: 7px; flex: none; }
.c-name { width: 102px; position: relative; }
.sort { width: 0; height: 0; border: 7px solid transparent; border-top: 5px solid #4a90d8; border-bottom: 0; position: absolute; left: 84px; top: 6px; }
.c-tag { width: 22px; padding-left: 4px; } .c-tag svg { width: 12px; height: 12px; }
.c-type { width: 77px; padding-left: 6px; } .c-size { width: 47px; } .c-fps { width: 50px; padding-left: 6px; font-size: 12px; letter-spacing: .8px; border-right: 1px solid #222; }
.proj-row { display: flex; align-items: center; height: 18px; margin-top: 0; padding-left: 18px; }
.comp-ic { width: 16px; height: 14px; }
.row-name { width: 83px; height: 18px; margin-left: 1px; background: #b5b5b5; color: #111; font-weight: 700; font-size: 10px; line-height: 18px; padding-left: 3px; word-spacing: 3px; }
.row-rest { width: 185px; height: 18px; background: #4b4b4b; display: flex; align-items: center; font-size: 9px; color: #8b8b8b; }
.swatch-tan { width: 10px; height: 10px; background: #a8977a; margin-left: 6px; }
.row-type { margin-left: 14px; width: 124px; }
.flow-ic { width: 13px; height: 13px; margin-left: 3px; }
.proj-foot { height: 21px; display: flex; align-items: center; padding-left: 5px; margin-bottom: 1px; }
.fi { width: 17px; height: 12px; margin-right: 8px; }
.bpc { width: 42px; height: 16px; font-size: 9px; line-height: 16px; text-align: center; color: #8a8a8a; border-left: 1px solid #2a2a2a; border-right: 1px solid #2a2a2a; margin-left: 1px; }
.fi.trash { width: 12px; height: 13px; margin: 0 10px 0 10px; }
.pill { width: 48px; height: 14px; background: #484848; border-radius: 7px; }

/* comp */
.comp { width: 904px; border: 1px solid #5b8bad; }
.comp-head { height: 25px; display: flex; align-items: center; padding-left: 10px; }
.x { color: #9a9a9a; font-size: 11px; width: 14px; }
.sq-tan { width: 10px; height: 10px; background: #a8977a; margin: 0 10px 0 1px; }
.lock-ic { width: 10px; height: 11px; margin-right: 8px; }
.comp-head .menu-ic { margin-left: 8px; }
.comp-tabs { height: 27px; border-bottom: 1px solid #1d1d1d; padding-left: 19px; padding-top: 3px; }
.comp-tab { display: block; width: 66px; height: 18px; background: #272727; color: #3f86c6; font-size: 12px; line-height: 17px; padding-left: 10px; border-radius: 2px; }
.canvas { flex: 1; display: flex; align-items: center; justify-content: center; }
.stage { width: 400px; height: 300px; background: #d67d89; position: relative; }
.bounds { position: absolute; left: 140px; top: 57px; width: 136px; height: 150px; }
.digit {
  position: absolute; left: 0; right: 0; top: 0; height: 150px; text-align: center;
  font: 900 193px/150px Inter, "Noto Sans", sans-serif; color: #ececec;
  -webkit-text-stroke: 5px #ececec;
  transform: scaleX(1.130); transform-origin: 50% 50%;
}
.h { position: absolute; width: 9px; height: 9px; background: #a82a40; border-radius: 1px; }
.h1 { left: -4px; top: -4px; } .h2 { left: 63px; top: -4px; } .h3 { left: 131px; top: -4px; }
.h4 { left: -4px; top: 71px; } .h5 { left: 131px; top: 71px; }
.h6 { left: -4px; top: 146px; } .h7 { left: 63px; top: 146px; } .h8 { left: 131px; top: 146px; }
.anchor { position: absolute; left: -16px; top: 141px; width: 15px; height: 15px; }
.comp-foot { height: 23px; display: flex; align-items: center; border-top: 1px solid #1d1d1d; padding-left: 5px; padding-bottom: 2px; font-size: 11px; color: #9f9f9f; }
.cf { width: 15px; height: 13px; flex: none; }
.w1 { margin-right: 6px; } .w2 { margin-right: 5px; }
.cdrop { display: flex; align-items: center; position: relative; height: 18px; flex: none; background: #2d2d2d; color: #b0b0b0; padding-left: 6px; }
.v { width: 6px; height: 6px; border: solid #a0a0a0; border-width: 0 1px 1px 0; transform: rotate(45deg) ; position: absolute; right: 5px; top: 4px; }
.d50 { width: 70px; }
.w3 { margin-left: 3px; }
.cf-act { width: 20px; height: 18px; background: #28282a; display: flex; align-items: center; justify-content: center; margin-left: 4px; }
.cf-act svg { width: 16px; height: 14px; }
.ctime { width: 52px; margin-left: 10px; color: #8f8f8f; }
.w4 { margin-left: 12px; } .w5 { margin-left: 7px; } .w6 { margin-left: 7px; }
.dhalf { width: 79px; margin-left: 6px; letter-spacing: 1.100px; background: none; font-size: 12px; padding-left: 4px; }
.w7 { margin-left: 5px; } .w8 { margin-left: 7px; }
.dcam { width: 102px; margin-left: 9px; letter-spacing: 2.300px; font-size: 12px; background: none; padding-left: 6px; }
.done { width: 68px; margin-left: 3px; background: none; padding-left: 9px; }
.done .v { right: 3px; }
.w9 { margin-left: 7px; } .w10 { margin-left: 9px; width: 14px; height: 14px; }
.plus { color: #3f86c6; margin-left: 7px; font-size: 10.500px; }

/* right */
.right { width: 208px; display: flex; flex-direction: column; gap: 4px; }
.info { height: 143px; }
.tabs { height: 25px; display: flex; align-items: center; padding-left: 12px; position: relative; }
.tab { display: flex; align-items: center; gap: 8px; color: #a6a6a6; font-size: 12.500px; letter-spacing: .3px; height: 25px; padding: 0 3px; white-space: nowrap; }
.tab.active { color: #c8c8c8; border-bottom: 2px solid #c8c8c8; }
.t-audio { margin-left: 20px; }
.info-body { height: 64px; display: flex; position: relative; padding-left: 9px; font-size: 10px; line-height: 13.300px; color: #7f7f7f; }
.black { width: 20px; height: 20px; background: #000; margin-top: 20px; }
.rgb { margin-left: 6px; width: 68px; padding-top: 7px; }
.vsep { width: 1px; height: 50px; background: #2b2b2b; margin-top: 9px; }
.cross { font-size: 16px; color: #b5b5b5; width: 22px; text-align: center; line-height: 16px; margin-top: 26px; margin-left: 2px; }
.xy { padding-top: 7px; }
.info-clip { height: 3px; margin: 3px 8px 0; border-top: 2px solid #3e3e3e; display: flex; gap: 5px; padding-left: 28px; }
.info-clip i { width: 12px; height: 1px; background: #8a8a8a; }
.info-extra { font-size: 10.500px; line-height: 14px; color: #8b8b8b; padding-left: 8px; }
.ie2 { font-size: 11px; } .ie3 { padding-left: 7px; }
.preview { height: 57px; }
.pv-head { height: 23px; display: flex; align-items: center; padding-left: 15px; gap: 9px; }
.pv-ctl { display: flex; gap: 11px; padding: 12px 0 0 47px; }
.pv-ctl svg { width: 13px; height: 11px; }
.chars { flex: 1; }
.ctabs { padding-left: 0; height: 23px; }
.ctabs .tab { height: 23px; }
.t-she { margin-left: -1px; width: 48px; }
.t-lib { width: 54px; padding-left: 9px; }
.t-ch { padding: 0 1px; width: 47px; margin-left: 9px; gap: 8px; }
.c-ch { position: absolute; right: 6px; top: 4px; margin: 0; }
.font-area { display: flex; padding: 11px 0 0 7px; height: 62px; }
.font-sel { width: 121px; display: flex; flex-direction: column; gap: 5px; }
.fsel { height: 19px; background: #2a2a2a; border-radius: 2px; font-size: 11px; line-height: 18px; padding-left: 7px; color: #b5b5b5; position: relative; }
.fsel .v { right: 6px; top: 5px; }
.font-tools { width: 30px; display: flex; flex-direction: column; justify-content: space-between; height: 44px; }
.dropper { width: 16px; height: 16px; margin-left: 7px; margin-top: 3px; }
.bw { width: 20px; height: 18px; background: linear-gradient(#0a0a0a 50%, #f4f4f4 50%); border: 1px solid #ddd; margin-left: 5px; }
.swatches { position: relative; width: 42px; height: 44px; }
.sw-fill { position: absolute; left: 0; top: 0; width: 29px; height: 29px; background: #ececec; border: 1px solid #111; }
.sw-stroke { position: absolute; left: 12px; top: 14px; width: 29px; height: 29px; background: linear-gradient(to top left, #fff 0 47%, #8d2a3e 47% 53%, #fff 53%); border: 1px solid #111; }
.sw-none { position: absolute; left: 1px; top: 31px; width: 11px; height: 12px; background: linear-gradient(to top right, #eee 0 46%, #a03 46% 54%, #eee 54%); }
.sw-swap { position: absolute; left: 29px; top: 1px; width: 12px; height: 12px; }
.cgrid { display: grid; grid-template-columns: 106px 90px; margin: 0 0 0 6px; width: 196px; row-gap: 1px; padding-bottom: 7px; }
.cc { display: flex; align-items: center; height: 20px; position: relative; }
.ci { width: 20px; height: 18px; margin-right: 4px; color: #c8c8c8; }
.c2 .ci { margin-right: 2px; }
.bl { color: #3f86c6; font-size: 10.500px; }
.auto { font-size: 12px; margin-left: 3px; letter-spacing: .5px; }
.u { margin-left: 3px; font-size: 12px; color: #a5a5a5; letter-spacing: .7px; }
.us { margin-left: 3px; font-size: 10.500px; color: #8f8f8f; }
.dimt { color: #555; margin-left: 0; }
.tr { position: absolute; right: 19px; top: 7px; width: 0; height: 0; border: 4px solid transparent; border-top: 6px solid #b5b5b5; border-bottom: 0; }
.c2 .tr { right: 2px; }
.sepb { border-bottom: 1px solid #3f3f3f; }
.svgt { font: 700 10px "Liberation Sans", sans-serif; fill: #c8c8c8; }
.svgd { font: 700 10px "Liberation Sans", sans-serif; fill: #333; }
.svgs { font: 9px "Noto Sans CJK JP", sans-serif; fill: #c8c8c8; }
.crow { display: flex; align-items: center; height: 29px; margin: 0 0 0 6px; width: 196px; position: relative; }
.crow .tr { left: 79px; right: auto; top: 12px; }
.crow .u { margin-left: -1px; }
.empty-drop { position: absolute; left: 90px; top: 4px; width: 106px; height: 19px; background: #2c2c2c; border-radius: 2px; }
.empty-drop .v { right: 7px; top: 5px; }
.g3 { padding-top: 4px; }
.styles { display: flex; font-family: "Liberation Serif", serif; font-weight: 700; font-size: 15px; color: #aaa; padding: 5px 0 0 33px; gap: 14px; height: 32px; }
.styles span { line-height: 20px; }
.it { font-style: italic; font-weight: 400; margin-left: 1px; }
.tt { margin-left: 3px; }
.tsc { margin-left: -8px; }
.tsup { margin-left: 1px; }
.tsub { margin-left: -2px; }
.tsc small { font-size: 11px; }
.styles sup, .styles sub { font-size: 7px; line-height: 0; }
.ligs { display: flex; align-items: center; padding: 3px 0 0 13px; font-size: 12px; color: #999; letter-spacing: 1.500px; }
.lt1 { margin-left: 4px; width: 80px; }
.ligs .check { width: 13px; height: 13px; }
.ligs .lt1:last-child { width: auto; }

/* timeline */
.lower { height: 278px; flex: none; margin-top: 4px; display: flex; gap: 3px; }
.timeline { width: 1131px; }
.tl-head { height: 24px; display: flex; align-items: center; padding-left: 12px; }
.tl-head .x { width: 13px; }
.sq-tan.lt { background: #b8ac80; margin: 0 12px 0 2px; }
.tl-name { margin-right: 8px; }
.tl-grid { flex: 1; display: flex; min-height: 0; }
.tl-left { width: 763px; display: flex; flex-direction: column; border-right: 1px solid #1a1a1a; }
.tl-ctl { height: 37px; display: flex; padding-top: 5px; }
.timecode { width: 106px; padding-left: 12px; }
.tc { font: 700 18.500px/18px "Liberation Serif", serif; color: #3f86c6; letter-spacing: .1px; white-space: nowrap; }
.tf { font-size: 9.500px; line-height: 11px; color: #28486a; margin-top: 1px; }
.tl-search { width: 454px; height: 19px; padding-left: 7px; background: #2a2a2a; margin-top: 4px; }
.tl-btns { display: flex; align-items: center; margin-left: 16px; height: 26px; padding-top: 4px; }
.tl-btns svg { width: 18px; height: 16px; }
.tl-btns svg:nth-child(2), .tl-btns svg:nth-child(6) { margin-left: 16px; }
.tl-btns svg:nth-child(3) { margin-left: 15px; }
.tl-btns svg:nth-child(4) { margin-left: 9px; }
.tl-btns svg:nth-child(5) { margin-left: 8px; }
.tl-cols { height: 21px; display: flex; align-items: center; background: #484848; border-top: 1px solid #111; border-bottom: 1px solid #111; font-size: 12.500px; color: #b5b5b5; letter-spacing: .8px; flex: none; }
.tl-cols > span { display: flex; align-items: center; height: 14px; border-right: 1px solid #252525; flex: none; }
.tc-ic { width: 70px; padding-left: 6px; gap: 3px; }
.tc-ic svg { width: 11px; height: 11px; color: #c8c8c8; }
.tc-ic .e { width: 13px; height: 9px; }
.dot { width: 7px; height: 7px; border-radius: 50%; background: #c8c8c8; margin: 0 2px; }
.tc-tag { width: 32px; padding-left: 13px; } .tc-tag svg { width: 13px; height: 13px; color: #c8c8c8; }
.tc-num { width: 33px; padding-left: 6px; font-size: 10px; }
.tc-src { width: 182px; padding-left: 6px; }
.tc-sw { width: 147px; padding-left: 4px; gap: 3px; }
.tc-sw svg { width: 12px; height: 12px; color: #b5b5b5; }
.fx { font: italic 13px "Liberation Serif", serif; color: #b5b5b5; width: 12px; letter-spacing: 0; }
.tc-mode { width: 81px; padding-left: 7px; border-right: 0 !important; }
.tc-t { width: 18px; font-size: 10px; color: #8a8a8a; border-right: 0 !important; padding-left: 0; }
.tc-trk { width: 67px; font-size: 10.500px; color: #8a8a8a; letter-spacing: .3px; }
.tc-par { width: 117px; padding-left: 6px; }
.tc-end { flex: 1 !important; border: 0 !important; }
.layer { height: 20px; flex: none; display: flex; align-items: center; background: #5c5c5c; border-bottom: 1px solid #333; }
.l-eye { width: 15px; height: 15px; background: #484848; margin-left: 5px; display: flex; align-items: center; justify-content: center; color: #ccc; }
.l-eye svg { width: 12px; height: 8px; }
.lbox { width: 14px; height: 13px; background: #4b4b4b; margin-left: 1px; flex: none; }
.b1 { margin-left: 16px; }
.twirl { width: 0; height: 0; border: 4px solid transparent; border-top: 7px solid #ccc; border-bottom: 0; margin: 1px 0 0 8px; }
.lred { width: 15px; height: 15px; background: #b52a38; margin-left: 6px; }
.lnum { width: 20px; padding-left: 6px; font-size: 10px; font-weight: 700; color: #c8c8c8; margin-left: 0; }
.lt-t { width: 14px; height: 14px; margin: 0 6px 0 15px; color: #c8c8c8; }
.lname { width: 159px; height: 19px; border: 2px solid #b8b8b8; background: #575757; font-size: 10px; font-weight: 700; color: #ccc; padding-left: 2px; line-height: 15px; }
.lsw { width: 14px; height: 14px; margin-left: 1px; background: #4a4a4a; color: #c8c8c8; display: flex; align-items: center; justify-content: center; }
.lname + .lsw { margin-left: 4px; }
.lsw svg { width: 12px; height: 12px; }
.dimsw { color: #8a8a8a; }
.b2 { margin-left: 31px; }
.ldrop { display: flex; align-items: center; position: relative; background: #333; height: 18px; color: #c5c5c5; font-size: 12px; padding-left: 7px; flex: none; }
.lmode { width: 68px; margin-left: 27px; }
.ldrop .v { top: 4px; }
.b3 { margin-left: 6px; background: #434343; }
.spiral { width: 20px; height: 19px; background: #5e5e5e; margin-left: 76px; display: flex; align-items: center; justify-content: center; }
.spiral svg { width: 13px; height: 13px; }
.lparent { width: 90px; margin-left: 2px; }
.prop { height: 19px; flex: none; display: flex; align-items: center; background: #3c3c3c; border-bottom: 1px solid #2f2f2f; font-size: 10px; }
.stop { width: 13px; height: 14px; margin-left: 131px; color: #b5b5b5; }
.pname { margin-left: 7px; width: 170px; color: #8c8c8c; }
.plink { width: 14px; height: 14px; background: #2c2c2c; color: #bbb; display: flex; align-items: center; justify-content: center; }
.plink svg { width: 12px; height: 7px; }
.pval { margin-left: 4px; color: #4484be; font-size: 9.500px; letter-spacing: .25px; }
.tl-right { flex: 1; position: relative; display: flex; flex-direction: column; }
.ruler { height: 37px; flex: none; }
.navbar { display: flex; align-items: center; height: 10px; margin: 8px 0 0 2px; width: 340px; }
.nav-h { width: 6px; height: 10px; background: #4a90d8; border-radius: 3px 0 0 3px; flex: none; }
.nav-on { width: 174px; height: 10px; background: #707070; border-right: 1px solid #000; }
.nav-off { flex: 1; height: 10px; background: #4e4a44; }
.marks { position: relative; height: 19px; font-size: 9.500px; color: #a0a0a0; letter-spacing: .7px; }
.marks span { position: absolute; top: 1px; }
.m0 { left: 8px; } .m1 { left: 116px; } .m2 { left: 236px; }
.tick { position: absolute; top: 14px; width: 1px; height: 5px; background: #777; }
.t-a { left: 125px; } .t-b { left: 245px; }
.work { height: 21px; flex: none; display: flex; position: relative; background: #333; }
.work-h { width: 7px; height: 15px; margin-top: 3px; background: #4a90d8; border-radius: 3px 0 0 3px; margin-left: 1px; flex: none; }
.work-main { width: 340px; background: #6b6b6b; border-top: 1px solid #111; display: flex; align-items: flex-end; flex: none; }
.work-green { width: 100%; height: 4px; background: #45b64c; margin-bottom: 1px; }
.shield { width: 12px; height: 15px; margin: 3px 0 0 3px; }
.bar-row { height: 20px; flex: none; display: flex; padding-left: 8px; }
.lbar { width: 340px; height: 18px; background: repeating-linear-gradient(90deg, rgba(0,0,0,.06) 0 1px, transparent 1px 3px), repeating-linear-gradient(0deg, rgba(255,255,255,.04) 0 1px, transparent 1px 2px), #a63c50; border-top: 1px solid #c9828c; border-bottom: 1px solid #6a2a36; }
.shield-b { width: 14px; height: 12px; margin: 3px 0 0 2px; }
.prop-r { height: 19px; flex: none; padding-left: 8px; }
.prop-area { width: 340px; height: 19px; background: #484848; border-bottom: 1px solid #333; }
.rest-r { flex: 1; padding-left: 8px; }
.rest-area { width: 340px; height: 100%; background: #454545; }
.playhead { position: absolute; left: 7px; top: 19px; bottom: 0; width: 1px; background: #5fa8e4; }
.phead-top { position: absolute; left: 2px; top: 22px; width: 11px; height: 14px; background: #4a90d8; clip-path: polygon(0 0, 100% 0, 100% 50%, 50% 100%, 0 50%); }
.ibeam { position: absolute; left: 5px; top: 81px; font: 700 13px/14px "Liberation Serif", serif; color: #c8c8c8; }
.tl-foot { height: 18px; flex: none; display: flex; align-items: center; padding-left: 6px; gap: 4px; border-top: 1px solid #282828; }
.tl-foot svg { width: 14px; height: 14px; }
.tl-foot .zoom-a { width: 13px; height: 9px; }
.zslider { width: 42px; height: 1px; background: #9a9a9a; position: relative; margin-left: 9px; }
.zslider i { position: absolute; left: 17px; top: -4px; width: 9px; height: 9px; border: 2px solid #c0c0c0; border-radius: 50%; background: #333; }
.tl-foot .zoom-b { width: 17px; height: 9px; margin-left: 8px; }
.zpill { width: 123px; height: 15px; border-radius: 8px; background: #464646; margin: 0 136px 0 3px; }

/* paragraph */
.para { flex: 1; }
.para-head { padding-left: 13px; height: 25px; gap: 9px; }
.al-row { display: flex; height: 33px; padding: 8px 0 0 7px; border-bottom: 1px solid #3f3f3f; margin: 0 0 0 0; width: 206px; }
.al { width: 25px; height: 20px; display: flex; align-items: center; justify-content: center; color: #b0b0b0; flex: none; }
.al svg { width: 16px; height: 14px; }
.al.on { width: 18px; background: #23282e; color: #4a9ae0; margin-right: 3px; }
.al.d { color: #4f4f4f; }
.al3 { margin-right: 5px; }
.pa-grid { display: grid; grid-template-columns: 70px 64px 70px; margin-left: 6px; padding-top: 1px; }
.pa { height: 19px; display: flex; align-items: center; white-space: nowrap; }
.pa svg { width: 17px; height: 15px; margin-right: 5px; }
.pa:nth-child(3) { margin-left: 3px; }
.pa-dir { gap: 2px; margin-left: 5px; }
.dir { width: 20px; height: 20px; display: flex; align-items: center; justify-content: center; }
.dir.on { background: #23282e; }
.dir svg { margin: 0; width: 16px; height: 13px; }

/* taskbar */
.taskbar { height: 40px; flex: none; margin-top: 2px; display: flex; align-items: center; background: linear-gradient(#11161b, #07090c); border-top: 1px solid #7a7a7a; position: relative; }
.orb { width: 38px; height: 38px; margin-left: 8px; }
.orb svg { width: 38px; height: 38px; }
.tb-btn { width: 57px; height: 37px; display: flex; align-items: center; justify-content: center; border: 1px solid #6a6a6a; border-radius: 3px; background: linear-gradient(135deg, #2a2a2c 0%, #6e6e70 45%, #2e2e30 100%); flex: none; }
.b-obs { margin-left: 14px; }
.b-obs svg { width: 30px; height: 30px; }
.tb-plain { width: 61px; height: 37px; display: flex; align-items: center; justify-content: center; flex: none; }
.tb-plain svg { width: 30px; height: 30px; }
.t-ie { margin-left: 3px; }
.t-pl { margin-left: 2px; }
.player { width: 30px; height: 30px; border-radius: 3px; background: #f6d720; display: flex; flex-direction: column; align-items: center; }
.tb-plain .pl-dot { width: 16px; height: 16px; margin-top: 3px; }
.pl-tx { font: 700 8.500px/10px "Liberation Sans", sans-serif; color: #222; }
.b-ex { margin-left: 3px; } .b-ex svg { width: 34px; height: 32px; }
.b-ae { margin-left: 5px; background: linear-gradient(135deg, #555 0%, #b5b5b5 45%, #666 100%); }
.ae-big { width: 30px; height: 30px; background: #250a48; border: 2px solid #9a72d8; color: #c6a8f4; font-size: 17px; line-height: 25px; text-align: center; }
.b-note { margin-left: 5px; } .b-note svg { width: 30px; height: 30px; }
.tray { display: flex; align-items: center; height: 100%; color: #eaeaea; }
.tray svg { flex: none; }
.t1 { width: 16px; height: 14px; }
.t2 { width: 13px; height: 12px; margin-left: 17px; }
.t3 { width: 15px; height: 16px; margin-left: 9px; }
.t4 { width: 16px; height: 16px; margin-left: 10px; }
.t5 { width: 16px; height: 16px; margin-left: 8px; }
.t6 { width: 16px; height: 14px; margin-left: 8px; }
.t7 { width: 16px; height: 14px; margin-left: 8px; }
.ring { width: 23px; height: 23px; border-radius: 50%; border: 2px solid #30c860; background: linear-gradient(#0e1a14 62%, #30c860 62%); margin-left: 15px; font-size: 11.500px; line-height: 18px; text-align: center; color: #eee; }
.clock { width: 100px; margin-left: 13px; text-align: center; font-size: 12.500px; line-height: 17px; color: #e8e8e8; white-space: nowrap; }
.showdesk { width: 13px; height: 38px; margin-left: 9px; margin-right: 1px; border: 1px solid #555; background: linear-gradient(#4a4a4a, #111); }
.cursor { position: absolute; left: 354px; top: 705px; width: 12px; height: 18px; }
```
